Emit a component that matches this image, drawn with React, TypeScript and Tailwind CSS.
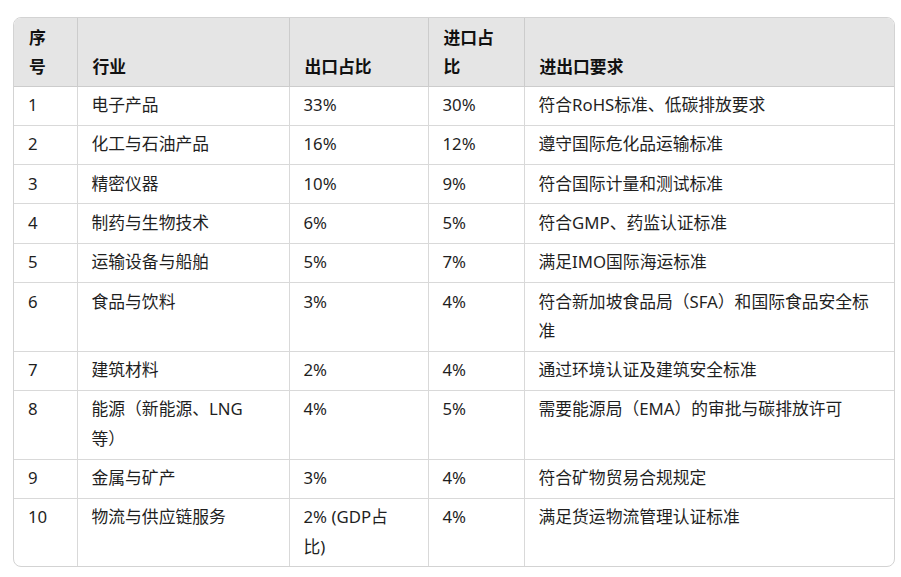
import type { ReactNode } from "react";

const rows: [string, ReactNode, ReactNode, string, string][] = [
  ["1", "电子产品", "33%", "30%", "符合RoHS标准、低碳排放要求"],
  ["2", "化工与石油产品", "16%", "12%", "遵守国际危化品运输标准"],
  ["3", "精密仪器", "10%", "9%", "符合国际计量和测试标准"],
  ["4", "制药与生物技术", "6%", "5%", "符合GMP、药监认证标准"],
  ["5", "运输设备与船舶", "5%", "7%", "满足IMO国际海运标准"],
  ["6", "食品与饮料", "3%", "4%", "符合新加坡食品局（SFA）和国际食品安全标准"],
  ["7", "建筑材料", "2%", "4%", "通过环境认证及建筑安全标准"],
  ["8", <>能源（新能源、LNG<br />等）</>, "4%", "5%", "需要能源局（EMA）的审批与碳排放许可"],
  ["9", "金属与矿产", "3%", "4%", "符合矿物贸易合规规定"],
  ["10", "物流与供应链服务", <>2% (GDP占<br />比)</>, "4%", "满足货运物流管理认证标准"],
];

const headers = ["序号", "行业", "出口占比", "进口占比", "进出口要求"];

const App = () => {
  return (
    <div
      className="min-h-[577px] bg-white pt-[17px] pl-[13px]"
      style={{ fontFamily: '"Noto Sans", "Noto Sans CJK SC", sans-serif' }}
    >
      <div className="w-[882px] overflow-hidden rounded-[8px] border border-[#d3d3d3]">
        <table className="w-full table-fixed border-collapse text-left text-[16.8px] leading-[29.3px]">
          <colgroup>
            <col className="w-[63px]" />
            <col className="w-[212px]" />
            <col className="w-[139px]" />
            <col className="w-[96px]" />
            <col />
          </colgroup>
          <thead>
            <tr className="bg-[#e5e5e5]">
              {headers.map(h => (
                <th
                  key={h}
                  className="border-r border-b border-[#cccccc] px-[15px] pt-[5px] pb-[4px] align-bottom font-bold text-[#111111] last:border-r-0"
                >
                  {h}
                </th>
              ))}
            </tr>
          </thead>
          <tbody>
            {rows.map((row, i) => (
              <tr key={row[0]}>
                {row.map((cell, j) => (
                  <td
                    key={j}
                    className={
                      "border-r border-[#d9d9d9] pl-[14px] pr-[15px] pt-[3.5px] pb-[5.5px] align-top text-[#1f1f1f] last:border-r-0 " +
                      (i < rows.length - 1 ? "border-b" : "")
                    }
                  >
                    {cell}
                  </td>
                ))}
              </tr>
            ))}
          </tbody>
        </table>
      </div>
    </div>
  );
};

export default App;
